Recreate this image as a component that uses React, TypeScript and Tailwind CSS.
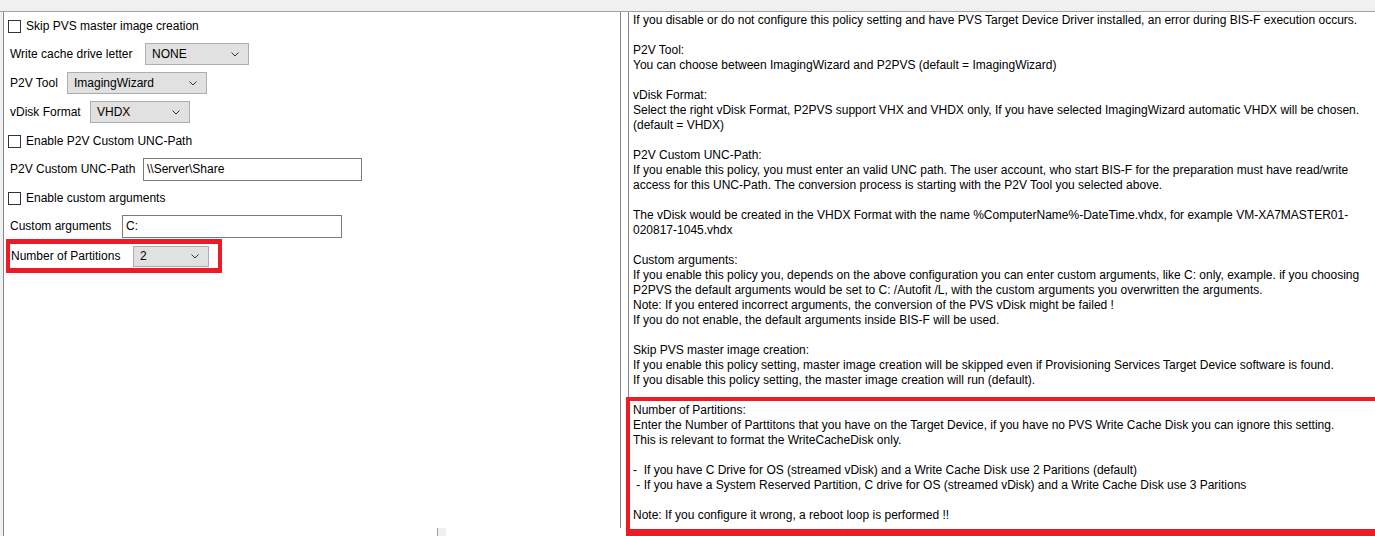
import React from "react";

const lines: string[] = [
  "If you disable or do not configure this policy setting and have PVS Target Device Driver installed, an error during BIS-F execution occurs.",
  "",
  "P2V Tool:",
  "You can choose between ImagingWizard and P2PVS (default = ImagingWizard)",
  "",
  "vDisk Format:",
  "Select the right vDisk Format, P2PVS support VHX and VHDX only, If you have selected ImagingWizard automatic VHDX will be chosen.",
  "(default = VHDX)",
  "",
  "P2V Custom UNC-Path:",
  "If you enable this policy, you must enter an valid UNC path. The user account, who start BIS-F for the preparation must have read/write",
  "access for this UNC-Path. The conversion process is starting with the P2V Tool you selected above.",
  "",
  "The vDisk would be created in the VHDX Format with the name %ComputerName%-DateTime.vhdx, for example VM-XA7MASTER01-",
  "020817-1045.vhdx",
  "",
  "Custom arguments:",
  "If you enable this policy you, depends on the above configuration you can enter custom arguments, like C: only, example. if you choosing",
  "P2PVS the default arguments would be set to C: /Autofit /L, with the custom arguments you overwritten the arguments.",
  "Note: If you entered incorrect arguments, the conversion of the PVS vDisk might be failed !",
  "If you do not enable, the default arguments inside BIS-F will be used.",
  "",
  "Skip PVS master image creation:",
  "If you enable this policy setting, master image creation will be skipped even if Provisioning Services Target Device software is found.",
  "If you disable this policy setting, the master image creation will run (default).",
  "",
  "Number of Partitions:",
  "Enter the Number of Parttitons that you have on the Target Device, if you have no PVS Write Cache Disk you can ignore this setting.",
  "This is relevant to format the WriteCacheDisk only.",
  "",
  "-  If you have C Drive for OS (streamed vDisk) and a Write Cache Disk use 2 Paritions (default)",
  " - If you have a System Reserved Partition, C drive for OS (streamed vDisk) and a Write Cache Disk use 3 Paritions",
  "",
  "Note: If you configure it wrong, a reboot loop is performed !!",
];

function Chevron() {
  return (
    <svg width="8" height="5" viewBox="0 0 8 5" className="shrink-0">
      <polyline points="0.5,0.5 4,4 7.5,0.5" fill="none" stroke="#333" strokeWidth="1" />
    </svg>
  );
}

function Select({ value, w, h = 22 }: { value: string; w: number; h?: number }) {
  return (
    <div
      className="flex items-center justify-between bg-[#e1e1e1] border border-[#adadad] pl-[6px] pr-[9px] shrink-0"
      style={{ width: w, height: h }}
    >
      <span>{value}</span>
      <Chevron />
    </div>
  );
}

function Input({ value, w }: { value: string; w: number }) {
  return (
    <div
      className="flex items-center bg-white border border-[#7a7a7a] pl-[3px] h-[23px] shrink-0"
      style={{ width: w }}
    >
      <span>{value}</span>
    </div>
  );
}

function Check({ label }: { label: string }) {
  return (
    <div className="flex items-center pl-[4px]">
      <div className="w-[13px] h-[13px] border border-[#333333] bg-white shrink-0" />
      <span className="ml-[5px]">{label}</span>
    </div>
  );
}

export default function App() {
  return (
    <div className="relative w-[1375px] h-[536px] bg-white overflow-hidden text-[12px] leading-[15px] text-black font-['Liberation_Sans',Arial,sans-serif]">
      <div className="h-[12px] bg-[#f0f0f0] border-b border-[#a0a0a0]" />
      <div className="flex h-[516px]">
        <div className="w-[3px] bg-[#f0f0f0] shrink-0" />
        <div className="w-[618px] shrink-0 border-l border-r border-[#828790] flex flex-col">
          <div className="h-[28px] flex items-center">
            <Check label="Skip PVS master image creation" />
          </div>
          <div className="h-[28px] flex items-center pl-[6px]">
            <span className="w-[135px] shrink-0">Write cache drive letter</span>
            <Select value="NONE" w={104} />
          </div>
          <div className="h-[30px] flex items-center pl-[6px]">
            <span className="w-[57px] shrink-0">P2V Tool</span>
            <Select value="ImagingWizard" w={140} />
          </div>
          <div className="h-[28px] flex items-center pl-[6px]">
            <span className="w-[80px] shrink-0">vDisk Format</span>
            <Select value="VHDX" w={100} />
          </div>
          <div className="h-[31px] flex items-center">
            <Check label="Enable P2V Custom UNC-Path" />
          </div>
          <div className="h-[25px] flex items-center pl-[6px]">
            <span className="w-[133px] shrink-0">P2V Custom UNC-Path</span>
            <Input value="\\Server\Share" w={219} />
          </div>
          <div className="h-[33px] flex items-center">
            <Check label="Enable custom arguments" />
          </div>
          <div className="h-[23px] flex items-center pl-[6px]">
            <span className="w-[112px] shrink-0">Custom arguments</span>
            <Input value="C:" w={220} />
          </div>
          <div className="ml-[2px] mt-[1px] w-[216px] h-[34px] border-x-4 border-y-[5px] border-[#ed1c24] flex items-center pl-[1px]">
            <span className="w-[122px] shrink-0">Number of Partitions</span>
            <Select value="2" w={76} h={21} />
          </div>
        </div>
        <div className="w-[7px] shrink-0" />
        <div className="flex-1 border-l border-[#828790] pl-[4px] pt-[1px]">
          {lines.map((l, i) => (
            <div key={i} className="h-[15px] whitespace-pre">
              {l}
            </div>
          ))}
        </div>
      </div>
      <div className="h-[8px] flex">
        <div className="w-[3px] bg-[#f0f0f0]" />
        <div className="w-[1px] bg-[#828790]" />
        <div className="w-[433px]" />
        <div className="w-[9px] bg-[#f0f0f0] border-l border-[#a0a0a0]" />
      </div>
      <div className="absolute left-[626px] top-[397px] w-[760px] h-[139px] border-x-4 border-t-4 border-b-[7px] border-[#ed1c24]" />
    </div>
  );
}
